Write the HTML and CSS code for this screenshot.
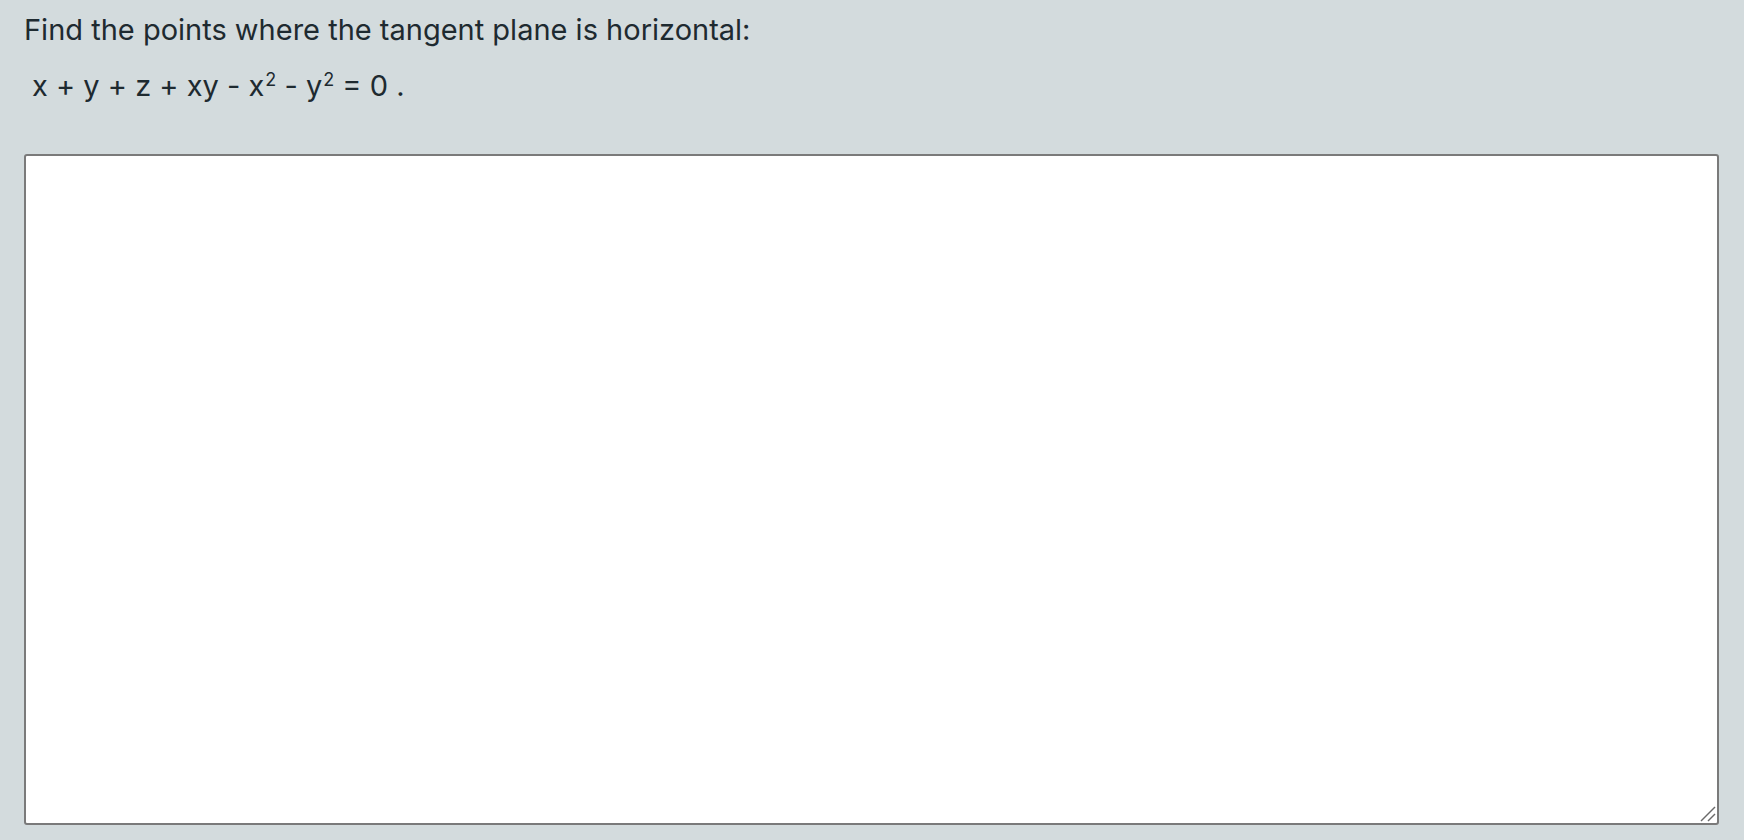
FILE: index.html
```html
<!DOCTYPE html>
<html lang="en">
<head>
<meta charset="utf-8">
<title>Tangent plane</title>
<link rel="stylesheet" href="styles.css">
</head>
<body>
<main class="question">
  <p class="prompt">Find the points where the tangent plane is horizontal:</p>
  <p class="equation">x + y + z + xy - x<sup>2</sup> - y<sup>2</sup> = 0 .</p>
  <div class="answer-wrap">
    <textarea class="answer" aria-label="Answer"></textarea>
    <svg class="grip" width="16" height="16" viewBox="0 0 16 16" aria-hidden="true">
      <line x1="1" y1="15" x2="15" y2="1" />
      <line x1="8" y1="15" x2="15" y2="8" />
    </svg>
  </div>
</main>
</body>
</html>
```

FILE: styles.css
```css
html, body {
  margin: 0;
  padding: 0;
  background: #d3dbdd;
}
.question {
  display: flex;
  flex-direction: column;
  padding: 0 25px 0 24px;
  font-family: Inter, "Noto Sans", sans-serif;
  color: #1e2a30;
}
.prompt {
  margin: 10px 0 0 0;
  font-size: 29px;
  line-height: 40px;
}
.equation {
  margin: 16px 0 0 8px;
  font-size: 29px;
  line-height: 40px;
}
.equation sup {
  font-size: 18px;
  line-height: 0;
  vertical-align: 10px;
  margin-left: 1px;
}
.answer-wrap {
  position: relative;
  margin-top: 48px;
  display: flex;
}
.answer {
  flex: 1;
  height: 671px;
  box-sizing: border-box;
  border: 2px solid #7a7a7a;
  border-radius: 3px;
  background: #fff;
  resize: none;
  font-family: inherit;
}
.grip {
  position: absolute;
  right: 3px;
  bottom: 3px;
}
.grip line {
  stroke: #6a6a6a;
  stroke-width: 1.4;
}
```
